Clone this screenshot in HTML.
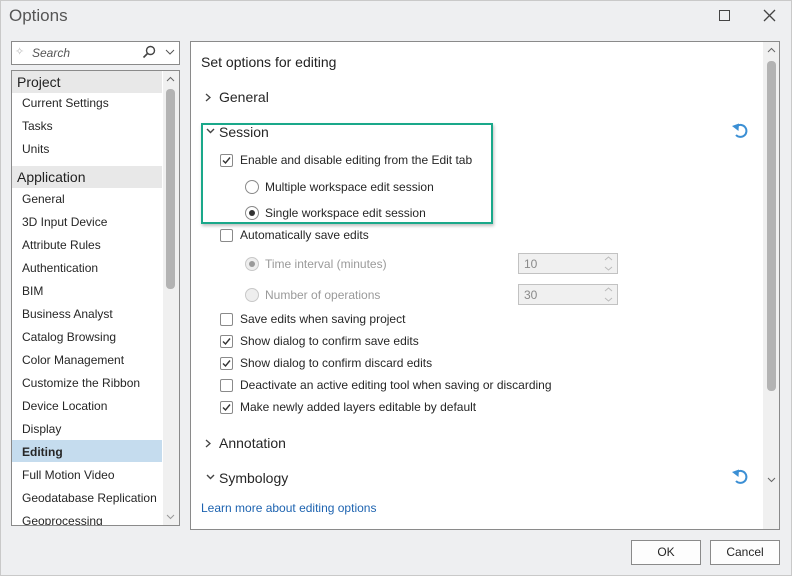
<!DOCTYPE html>
<html><head><style>
*{box-sizing:border-box;margin:0;padding:0}
body{width:792px;height:576px;background:#eeeff1;font-family:"Liberation Sans",sans-serif;font-size:12px;color:#262626;position:relative;overflow:hidden}
.a{position:absolute;white-space:nowrap}
.cb{position:absolute;width:13px;height:13px;border:1px solid #8a8a8a;border-radius:2px;background:#fff}
.cb svg{position:absolute;left:0px;top:0px}
.rd{position:absolute;width:14px;height:14px;border:1px solid #8a8a8a;border-radius:50%;background:#fff}
.rd.on::after{content:"";position:absolute;left:3px;top:3px;width:6px;height:6px;border-radius:50%;background:#333}
.dis{color:#9a9a9a}
.rd.d{border-color:#c8c8c8;background:#eee}
.rd.d.on::after{background:#9a9a9a}
.li{position:absolute;left:22px;font-size:12px}
.hd{position:absolute;left:12px;width:150px;height:22px;background:#e8e8e8;font-size:14px;padding:3px 5px;color:#222}
.sp{position:absolute;width:100px;height:21px;border:1px solid #c2c2c2;background:#f0f0f0;color:#8a8a8a;padding:3px 5px;font-size:12px}
.btn{position:absolute;height:25px;border:1px solid #8a8a8a;background:#fdfdfd;text-align:center;line-height:23px;font-size:12px}
</style></head><body>
<div class="a" style="left:0;top:0;width:792px;height:576px;border:1px solid #c9c9c9"></div>
<div class="a" style="left:9px;top:6px;font-size:17px;color:#555">Options</div>
<div class="a" style="left:719px;top:10px;width:11px;height:11px;border:1px solid #444"></div>
<svg class="a" style="left:763px;top:9px" width="13" height="13"><path d="M1 1L12 12M12 1L1 12" stroke="#444" stroke-width="1.3"/></svg>

<!-- search -->
<div class="a" style="left:11px;top:41px;width:169px;height:24px;border:1px solid #8a8a8a;background:#fff"></div>
<div class="a" style="left:15px;top:45px;color:#bbb;font-size:11px">✧</div>
<div class="a" style="left:32px;top:46px;font-style:italic;color:#555">Search</div>
<svg class="a" style="left:142px;top:45px" width="14" height="14"><circle cx="8.5" cy="5.5" r="4" fill="none" stroke="#444" stroke-width="1.4"/><line x1="5.5" y1="8.5" x2="1.5" y2="12.5" stroke="#444" stroke-width="1.6"/></svg>
<svg class="a" style="left:165px;top:49px" width="10" height="7"><path d="M1 1L5 5L9 1" fill="none" stroke="#555"/></svg>

<!-- list -->
<div class="a" style="left:11px;top:70px;width:169px;height:456px;border:1px solid #8a8a8a;background:#fff;overflow:hidden"></div>
<div class="hd" style="top:71px">Project</div>
<div class="li" style="top:96px">Current Settings</div>
<div class="li" style="top:119px">Tasks</div>
<div class="li" style="top:142px">Units</div>
<div class="hd" style="top:166px">Application</div>
<div class="li" style="top:192px">General</div>
<div class="li" style="top:215px">3D Input Device</div>
<div class="li" style="top:238px">Attribute Rules</div>
<div class="li" style="top:261px">Authentication</div>
<div class="li" style="top:284px">BIM</div>
<div class="li" style="top:307px">Business Analyst</div>
<div class="li" style="top:330px">Catalog Browsing</div>
<div class="li" style="top:353px">Color Management</div>
<div class="li" style="top:376px">Customize the Ribbon</div>
<div class="li" style="top:399px">Device Location</div>
<div class="li" style="top:422px">Display</div>
<div class="a" style="left:12px;top:440px;width:150px;height:22px;background:#c5dcee"></div>
<div class="li" style="top:445px;font-weight:bold">Editing</div>
<div class="li" style="top:468px">Full Motion Video</div>
<div class="li" style="top:491px">Geodatabase Replication</div>
<div class="a" style="left:12px;top:510px;width:150px;height:15px;overflow:hidden"><div style="position:absolute;left:10px;top:4px">Geoprocessing</div></div>
<div class="a" style="left:163px;top:71px;width:16px;height:454px;background:#f0f0f0"></div>
<svg class="a" style="left:166px;top:76px" width="9" height="6"><path d="M1 5L4.5 1.5L8 5" fill="none" stroke="#666"/></svg>
<div class="a" style="left:166px;top:89px;width:9px;height:200px;background:#b3b3b3;border-radius:4px"></div>
<svg class="a" style="left:166px;top:514px" width="9" height="6"><path d="M1 1L4.5 4.5L8 1" fill="none" stroke="#999"/></svg>

<!-- right panel -->
<div class="a" style="left:190px;top:41px;width:590px;height:489px;border:1px solid #8a8a8a;background:#fff"></div>
<div class="a" style="left:763px;top:42px;width:16px;height:487px;background:#f0f0f0"></div>
<svg class="a" style="left:767px;top:47px" width="9" height="6"><path d="M1 5L4.5 1.5L8 5" fill="none" stroke="#666"/></svg>
<div class="a" style="left:767px;top:61px;width:9px;height:330px;background:#b3b3b3;border-radius:4px"></div>
<svg class="a" style="left:767px;top:477px" width="9" height="6"><path d="M1 1L4.5 4.5L8 1" fill="none" stroke="#666"/></svg>

<div class="a" style="left:201px;top:54px;font-size:14px;color:#222">Set options for editing</div>
<svg class="a" style="left:205px;top:93px" width="6" height="9"><path d="M1 1L5 4.5L1 8" fill="none" stroke="#444" stroke-width="1.3"/></svg>
<div class="a" style="left:219px;top:89px;font-size:14px">General</div>
<svg class="a" style="left:206px;top:128px" width="9" height="6"><path d="M1 1L4.5 4.5L8 1" fill="none" stroke="#444" stroke-width="1.4"/></svg>
<div class="a" style="left:219px;top:124px;font-size:14px">Session</div>
<svg class="a" style="left:731px;top:122px" width="20" height="18"><path d="M6 4A6 6 0 1 1 5 13" fill="none" stroke="#3b8fd4" stroke-width="2"/><path d="M1 4L8 1.5L7.5 9Z" fill="#3b8fd4"/></svg>

<div class="a" style="left:201px;top:123px;width:292px;height:101px;border:2px solid #1aa88a;box-shadow:1px 2px 3px rgba(0,0,0,.25)"></div>
<div class="cb" style="left:220px;top:154px"><svg width="11" height="11"><path d="M2 5.5L4.5 8L9 2.5" fill="none" stroke="#333" stroke-width="1.4"/></svg></div>
<div class="a" style="left:240px;top:153px">Enable and disable editing from the Edit tab</div>
<div class="rd" style="left:245px;top:180px"></div>
<div class="a" style="left:265px;top:180px">Multiple workspace edit session</div>
<div class="rd on" style="left:245px;top:206px"></div>
<div class="a" style="left:265px;top:206px">Single workspace edit session</div>

<div class="cb" style="left:220px;top:229px"></div>
<div class="a" style="left:240px;top:228px">Automatically save edits</div>
<div class="rd d on" style="left:245px;top:257px"></div>
<div class="a dis" style="left:265px;top:257px">Time interval (minutes)</div>
<div class="rd d" style="left:245px;top:288px"></div>
<div class="a dis" style="left:265px;top:288px">Number of operations</div>
<div class="sp" style="left:518px;top:253px">10</div>
<div class="sp" style="left:518px;top:284px">30</div>
<svg class="a" style="left:604px;top:256px" width="9" height="15"><path d="M1 4L4.5 1L8 4M1 11L4.5 14L8 11" fill="none" stroke="#bbb"/></svg>
<svg class="a" style="left:604px;top:287px" width="9" height="15"><path d="M1 4L4.5 1L8 4M1 11L4.5 14L8 11" fill="none" stroke="#bbb"/></svg>

<div class="cb" style="left:220px;top:313px"></div>
<div class="a" style="left:240px;top:312px">Save edits when saving project</div>
<div class="cb" style="left:220px;top:335px"><svg width="11" height="11"><path d="M2 5.5L4.5 8L9 2.5" fill="none" stroke="#333" stroke-width="1.4"/></svg></div>
<div class="a" style="left:240px;top:334px">Show dialog to confirm save edits</div>
<div class="cb" style="left:220px;top:357px"><svg width="11" height="11"><path d="M2 5.5L4.5 8L9 2.5" fill="none" stroke="#333" stroke-width="1.4"/></svg></div>
<div class="a" style="left:240px;top:356px">Show dialog to confirm discard edits</div>
<div class="cb" style="left:220px;top:379px"></div>
<div class="a" style="left:240px;top:378px">Deactivate an active editing tool when saving or discarding</div>
<div class="cb" style="left:220px;top:401px"><svg width="11" height="11"><path d="M2 5.5L4.5 8L9 2.5" fill="none" stroke="#333" stroke-width="1.4"/></svg></div>
<div class="a" style="left:240px;top:400px">Make newly added layers editable by default</div>

<svg class="a" style="left:205px;top:439px" width="6" height="9"><path d="M1 1L5 4.5L1 8" fill="none" stroke="#444" stroke-width="1.3"/></svg>
<div class="a" style="left:219px;top:435px;font-size:14px">Annotation</div>
<svg class="a" style="left:206px;top:474px" width="9" height="6"><path d="M1 1L4.5 4.5L8 1" fill="none" stroke="#444" stroke-width="1.4"/></svg>
<div class="a" style="left:219px;top:470px;font-size:14px">Symbology</div>
<svg class="a" style="left:731px;top:468px" width="20" height="18"><path d="M6 4A6 6 0 1 1 5 13" fill="none" stroke="#3b8fd4" stroke-width="2"/><path d="M1 4L8 1.5L7.5 9Z" fill="#3b8fd4"/></svg>
<div class="a" style="left:201px;top:501px;color:#1d63b0">Learn more about editing options</div>

<div class="btn" style="left:631px;top:540px;width:70px">OK</div>
<div class="btn" style="left:710px;top:540px;width:70px">Cancel</div>
</body></html>
